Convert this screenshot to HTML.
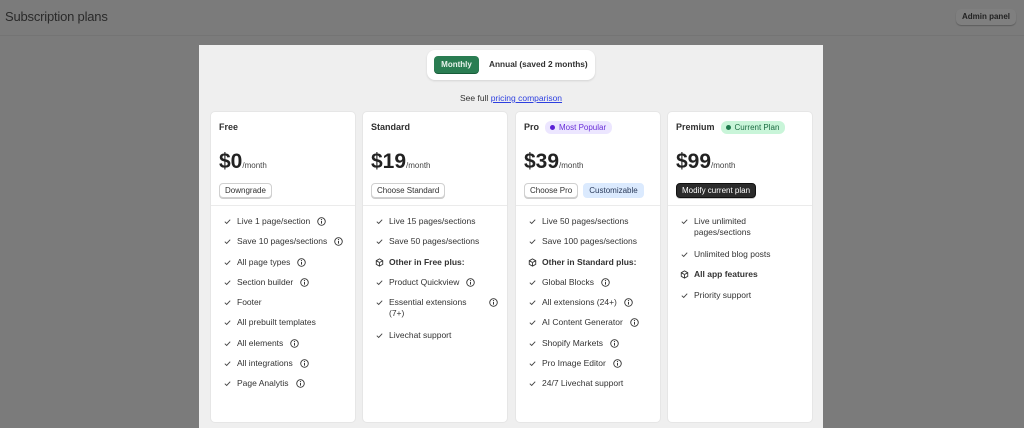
<!DOCTYPE html>
<html><head><meta charset="utf-8"><style>
*{box-sizing:border-box;margin:0;padding:0}
body{width:1024px;height:428px;overflow:hidden;background:#7b7b7b;font-family:"Liberation Sans",sans-serif;color:#303030;position:relative}
.title{position:absolute;left:5px;top:9px;font-size:13px;color:#2a2a2a;letter-spacing:-0.2px}
.admin{position:absolute;left:956px;top:9px;width:60px;height:16px;border-radius:5px;background:#7f7f7f;box-shadow:0 1px 1px rgba(0,0,0,.25);font-size:8px;font-weight:bold;color:#222;text-align:center;line-height:16px}
.hline{position:absolute;left:0;right:0;top:35px;height:1px;background:#747474}
.modal{position:absolute;left:199px;top:45px;width:624px;height:383px;background:#efefef}
.toggle{position:absolute;left:228px;top:5px;width:168px;height:30px;background:#fff;border-radius:8px;box-shadow:0 1px 2px rgba(0,0,0,.12)}
.mon{position:absolute;left:7px;top:6px;width:45px;height:17px;background:#2a7d52;border-radius:4px;color:#e8f3ec;font-size:8px;font-weight:bold;text-align:center;line-height:17px;box-shadow:0 1px 0 #175c39}
.ann{position:absolute;left:62px;top:6px;font-size:8.3px;font-weight:bold;line-height:17px;color:#303030}
.see{position:absolute;left:0;width:624px;top:48px;text-align:center;font-size:8.5px;color:#333}
.see a{color:#2d3fe0;text-decoration:underline}
.card{position:absolute;top:67px;width:144px;height:310px;background:#fff;border-radius:4px;box-shadow:0 0 0 1px #e6e6e6}
.head{height:94px;border-bottom:1px solid #ebebeb;padding:8px 0 0 8px;position:relative}
.name{font-size:9px;font-weight:bold;height:14px;line-height:14px;display:flex;align-items:center;gap:6px}
.badge{font-size:8px;font-weight:normal;border-radius:6px;padding:0 6px 0 5px;height:13px;line-height:13px;display:inline-flex;align-items:center;gap:4px}
.badge i{width:5px;height:5px;border-radius:50%;display:inline-block}
.price{position:absolute;left:8px;top:38px;font-size:21px;font-weight:bold;color:#222}
.price span{font-size:8px;font-weight:normal;color:#444}
.btns{position:absolute;left:8px;top:71px;display:flex;gap:5px}
.b{font-size:8px;height:15px;line-height:14px;padding:0 5px;border-radius:4px;border:1px solid #d0d0d0;box-shadow:0 1px 0 #ccc;color:#303030;background:#fff}
.b.dark{background:#2b2b2b;color:#fff;border-color:#111}
.b.blue{background:#dbeafe;border-color:#dbeafe;box-shadow:none;color:#2a3a5a}
ul{list-style:none;padding:10px 0 0 12px}
li{font-size:8.5px;line-height:11px;min-height:20.3px;display:flex;align-items:flex-start;color:#333;position:relative}
li .ic{width:14px;flex:none;display:flex;align-items:center;height:11px}
li .t{max-width:90px}
li b{font-weight:bold}
.info{margin-left:7px;flex:none;margin-top:1px;width:9px;height:9px}
</style></head><body>
<svg width="0" height="0" style="position:absolute"><defs>
<symbol id="i" viewBox="0 0 10 10"><circle cx="5" cy="5" r="4.2" fill="none" stroke="#333" stroke-width="1"/><path d="M5 4.4V7.4" stroke="#333" stroke-width="1.1"/><circle cx="5" cy="2.9" r=".65" fill="#333"/></symbol>
<symbol id="c" viewBox="0 0 10 10"><path d="M2 5.2L4.1 7.2L8 3" fill="none" stroke="#444" stroke-width="1"/></symbol>
<symbol id="x" viewBox="0 0 10 10"><path d="M5 1L8.6 3V7L5 9L1.4 7V3Z M1.4 3L5 5L8.6 3 M5 5V9" fill="none" stroke="#333" stroke-width="1"/></symbol>
</defs></svg>
<div class="title">Subscription plans</div>
<div class="admin">Admin panel</div>
<div class="hline"></div>
<div class="modal">
<div class="toggle"><div class="mon">Monthly</div><div class="ann">Annual (saved 2 months)</div></div>
<div class="see">See full <a>pricing comparison</a></div>

<div class="card" style="left:12px">
<div class="head"><div class="name">Free</div><div class="price">$0<span>/month</span></div><div class="btns"><div class="b">Downgrade</div></div></div>
<ul>
<li><span class="ic"><svg width="9" height="9"><use href="#c"/></svg></span><span>Live 1 page/section</span><svg class="info"><use href="#i"/></svg></li>
<li><span class="ic"><svg width="9" height="9"><use href="#c"/></svg></span><span>Save 10 pages/sections</span><svg class="info"><use href="#i"/></svg></li>
<li><span class="ic"><svg width="9" height="9"><use href="#c"/></svg></span><span>All page types</span><svg class="info"><use href="#i"/></svg></li>
<li><span class="ic"><svg width="9" height="9"><use href="#c"/></svg></span><span>Section builder</span><svg class="info"><use href="#i"/></svg></li>
<li><span class="ic"><svg width="9" height="9"><use href="#c"/></svg></span><span>Footer</span></li>
<li><span class="ic"><svg width="9" height="9"><use href="#c"/></svg></span><span>All prebuilt templates</span></li>
<li><span class="ic"><svg width="9" height="9"><use href="#c"/></svg></span><span>All elements</span><svg class="info"><use href="#i"/></svg></li>
<li><span class="ic"><svg width="9" height="9"><use href="#c"/></svg></span><span>All integrations</span><svg class="info"><use href="#i"/></svg></li>
<li><span class="ic"><svg width="9" height="9"><use href="#c"/></svg></span><span>Page Analytis</span><svg class="info"><use href="#i"/></svg></li>
</ul></div>

<div class="card" style="left:164px">
<div class="head"><div class="name">Standard</div><div class="price">$19<span>/month</span></div><div class="btns"><div class="b">Choose Standard</div></div></div>
<ul>
<li><span class="ic"><svg width="9" height="9"><use href="#c"/></svg></span><span>Live 15 pages/sections</span></li>
<li><span class="ic"><svg width="9" height="9"><use href="#c"/></svg></span><span>Save 50 pages/sections</span></li>
<li><span class="ic"><svg width="9" height="9"><use href="#x"/></svg></span><b>Other in Free plus:</b></li>
<li><span class="ic"><svg width="9" height="9"><use href="#c"/></svg></span><span>Product Quickview</span><svg class="info"><use href="#i"/></svg></li>
<li style="min-height:33px"><span class="ic"><svg width="9" height="9"><use href="#c"/></svg></span><span class="t" style="max-width:85px">Essential extensions (7+)</span><svg class="info" style="position:absolute;left:114px;top:0;margin:1px 0 0"><use href="#i"/></svg></li>
<li><span class="ic"><svg width="9" height="9"><use href="#c"/></svg></span><span>Livechat support</span></li>
</ul></div>

<div class="card" style="left:317px">
<div class="head"><div class="name">Pro <span class="badge" style="background:#ece6ff;color:#6a2fd8"><i style="background:#5b21d6"></i>Most Popular</span></div><div class="price">$39<span>/month</span></div><div class="btns"><div class="b">Choose Pro</div><div class="b blue">Customizable</div></div></div>
<ul>
<li><span class="ic"><svg width="9" height="9"><use href="#c"/></svg></span><span>Live 50 pages/sections</span></li>
<li><span class="ic"><svg width="9" height="9"><use href="#c"/></svg></span><span>Save 100 pages/sections</span></li>
<li><span class="ic"><svg width="9" height="9"><use href="#x"/></svg></span><b>Other in Standard plus:</b></li>
<li><span class="ic"><svg width="9" height="9"><use href="#c"/></svg></span><span>Global Blocks</span><svg class="info"><use href="#i"/></svg></li>
<li><span class="ic"><svg width="9" height="9"><use href="#c"/></svg></span><span>All extensions (24+)</span><svg class="info"><use href="#i"/></svg></li>
<li><span class="ic"><svg width="9" height="9"><use href="#c"/></svg></span><span>AI Content Generator</span><svg class="info"><use href="#i"/></svg></li>
<li><span class="ic"><svg width="9" height="9"><use href="#c"/></svg></span><span>Shopify Markets</span><svg class="info"><use href="#i"/></svg></li>
<li><span class="ic"><svg width="9" height="9"><use href="#c"/></svg></span><span>Pro Image Editor</span><svg class="info"><use href="#i"/></svg></li>
<li><span class="ic"><svg width="9" height="9"><use href="#c"/></svg></span><span>24/7 Livechat support</span></li>
</ul></div>

<div class="card" style="left:469px">
<div class="head"><div class="name">Premium <span class="badge" style="background:#c9f5d9;color:#1d6b42"><i style="background:#1f7a4d"></i>Current Plan</span></div><div class="price">$99<span>/month</span></div><div class="btns"><div class="b dark">Modify current plan</div></div></div>
<ul>
<li style="min-height:33px"><span class="ic"><svg width="9" height="9"><use href="#c"/></svg></span><span class="t">Live unlimited pages/sections</span></li>
<li><span class="ic"><svg width="9" height="9"><use href="#c"/></svg></span><span>Unlimited blog posts</span></li>
<li><span class="ic"><svg width="9" height="9"><use href="#x"/></svg></span><b>All app features</b></li>
<li><span class="ic"><svg width="9" height="9"><use href="#c"/></svg></span><span>Priority support</span></li>
</ul></div>
</div>
</body></html>
